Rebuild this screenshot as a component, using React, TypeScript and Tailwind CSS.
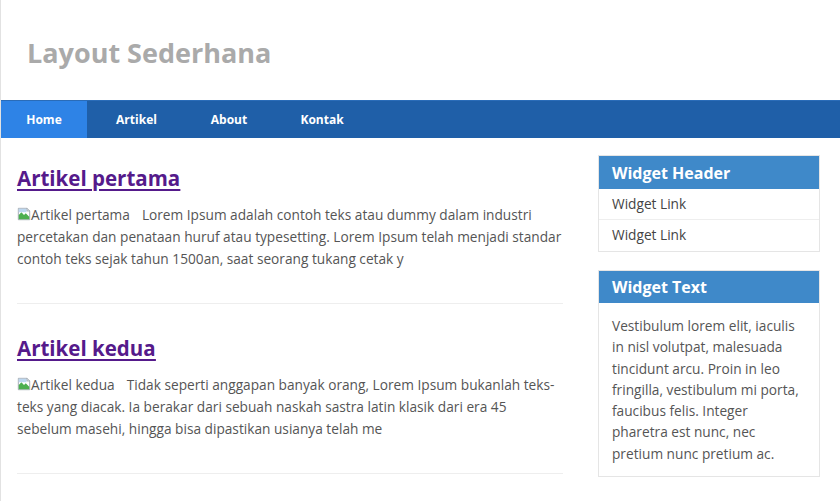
import React from 'react';

const articles = [
  {
    title: 'Artikel pertama',
    body: 'Lorem Ipsum adalah contoh teks atau dummy dalam industri percetakan dan penataan huruf atau typesetting. Lorem Ipsum telah menjadi standar contoh teks sejak tahun 1500an, saat seorang tukang cetak y',
  },
  {
    title: 'Artikel kedua',
    body: 'Tidak seperti anggapan banyak orang, Lorem Ipsum bukanlah teks-teks yang diacak. Ia berakar dari sebuah naskah sastra latin klasik dari era 45 sebelum masehi, hingga bisa dipastikan usianya telah me',
  },
];

const menu = [
  { label: 'Home', w: 'w-[86px]' },
  { label: 'Artikel', w: 'w-[99px]' },
  { label: 'About', w: 'w-[86px]' },
  { label: 'Kontak', w: 'w-[100px]' },
];

// broken-image placeholder, like the browser draws for a missing picture
const BrokenImage = () => (
  <svg width="14" height="16" viewBox="0 0 16 16" className="inline-block align-[-2px]">
    <path d="M1.5 1.5h10l3 3v10h-13z" fill="#fff" stroke="#9aa3ad" />
    <path d="M2 9l3-3 3 3 2-2 4 4v3H2z" fill="#4caf50" />
    <path d="M2 2h9v4H2z" fill="#bcd7f0" />
    <path d="M11.5 1.5v3h3" fill="none" stroke="#9aa3ad" />
  </svg>
);

const Article = ({ title, body }: { title: string; body: string }) => (
  <article className="pt-[22px] pb-[33px] border-b border-[#eeeeee] mb-[7px]">
    <h2 className="text-[20.5px] font-bold leading-[30px] text-[#551a8b] underline underline-offset-[3px] decoration-[2px]">
      <a href="#">{title}</a>
    </h2>
    <p className="mt-[11px] text-[13.7px] leading-[22px] text-[#555]">
      <span className="mr-[12px] text-[#555]">
        <BrokenImage />
        <span>{title}</span>
      </span>
      {body}
    </p>
  </article>
);

export default function App() {
  return (
    <div className="min-h-screen bg-white border-l border-[#e2e2e2] font-['Open_Sans',sans-serif]">
      <header className="h-[100px] flex items-center pl-[26px]">
        <h1 className="text-[27px] font-bold text-[#aaaaaa] mt-[6px]">Layout Sederhana</h1>
      </header>

      <nav className="h-[38px] bg-[#1f5fa8] border-t border-[#2a6cb8] flex">
        {menu.map((item, i) => (
          <a
            key={item.label}
            href="#"
            className={`flex items-center justify-center ${item.w} text-[12px] font-bold text-white ${
              i === 0 ? 'bg-[#2e83e6]' : ''
            }`}
          >
            {item.label}
          </a>
        ))}
      </nav>

      <main className="flex pl-[16px] pr-[19px] pt-[3px]">
        <section className="w-[546px]">
          {articles.map((a) => (
            <Article key={a.title} title={a.title} body={a.body} />
          ))}
        </section>

        <aside className="ml-[35px] w-[222px] pt-[14px] space-y-[18px]">
          <div className="border border-[#e5e5e5]">
            <h3 className="h-[33px] bg-[#3f89c9] px-[13px] flex items-center text-[16px] font-bold text-white">
              Widget Header
            </h3>
            <ul className="text-[13.7px] text-[#444]">
              <li className="h-[31px] flex items-center px-[13px] border-b border-[#eeeeee]">
                <a href="#">Widget Link</a>
              </li>
              <li className="h-[31px] flex items-center px-[13px]">
                <a href="#">Widget Link</a>
              </li>
            </ul>
          </div>

          <div className="border border-[#e5e5e5]">
            <h3 className="h-[32px] bg-[#3f89c9] px-[13px] flex items-center text-[16px] font-bold text-white">
              Widget Text
            </h3>
            <p className="px-[13px] pt-[12px] pb-[12px] text-[13.7px] leading-[21.3px] text-[#555]">
              Vestibulum lorem elit, iaculis in nisl volutpat, malesuada tincidunt arcu. Proin in leo
              fringilla, vestibulum mi porta, faucibus felis. Integer pharetra est nunc, nec pretium
              nunc pretium ac.
            </p>
          </div>
        </aside>
      </main>
    </div>
  );
}
